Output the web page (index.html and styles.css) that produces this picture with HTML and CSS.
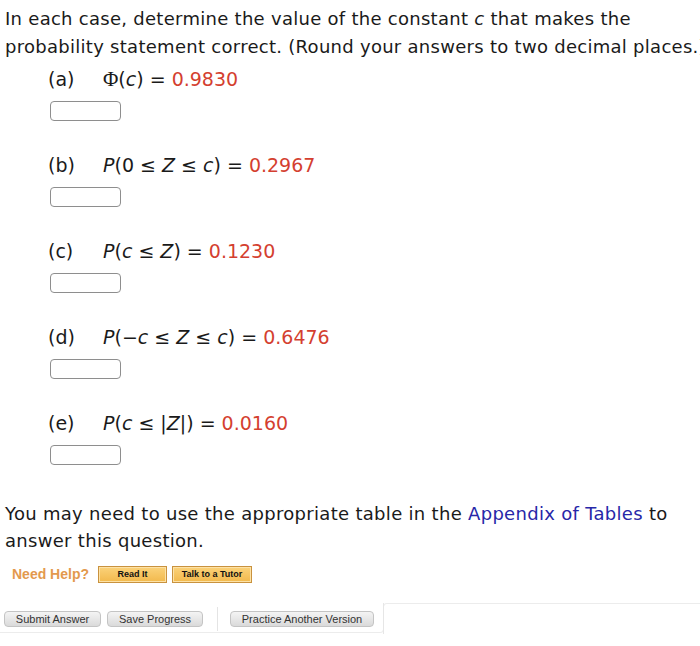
FILE: index.html
```html
<!DOCTYPE html>
<html>
<head>
<meta charset="utf-8">
<link rel="stylesheet" href="styles.css">
</head>
<body>
<div class="page">
  <p class="intro">In each case, determine the value of the constant <i>c</i> that makes the<br>probability statement correct. (Round your answers to two decimal places.)</p>

  <div class="part">
    <div class="stmt"><span class="lbl">(a)</span><span class="phi">Φ</span>(<i>c</i>) = <span class="num">0.9830</span></div>
    <div class="answer"></div>
  </div>
  <div class="part">
    <div class="stmt"><span class="lbl">(b)</span><i>P</i>(0 ≤ <i>Z</i> ≤ <i>c</i>) = <span class="num">0.2967</span></div>
    <div class="answer"></div>
  </div>
  <div class="part">
    <div class="stmt"><span class="lbl">(c)</span><i>P</i>(<i>c</i> ≤ <i>Z</i>) = <span class="num">0.1230</span></div>
    <div class="answer"></div>
  </div>
  <div class="part">
    <div class="stmt"><span class="lbl">(d)</span><i>P</i>(−<i>c</i> ≤ <i>Z</i> ≤ <i>c</i>) = <span class="num">0.6476</span></div>
    <div class="answer"></div>
  </div>
  <div class="part">
    <div class="stmt"><span class="lbl">(e)</span><i>P</i>(<i>c</i> ≤ |<i>Z</i>|) = <span class="num">0.0160</span></div>
    <div class="answer"></div>
  </div>

  <p class="note">You may need to use the appropriate table in the <span class="link">Appendix of Tables</span> to<br>answer this question.</p>

  <div class="help">
    <span class="help-label">Need Help?</span>
    <span class="gold-btn read">Read It</span>
    <span class="gold-btn tutor">Talk to a Tutor</span>
  </div>

  <div class="actions">
    <div class="actions-left">
      <span class="gray-btn submit">Submit Answer</span>
      <span class="gray-btn save">Save Progress</span>
      <span class="divider"></span>
      <span class="gray-btn practice">Practice Another Version</span>
    </div>
    <div class="actions-right"></div>
  </div>
</div>
</body>
</html>
```

FILE: styles.css
```css
html, body {
  margin: 0;
  padding: 0;
  background: #fff;
}
.page {
  width: 700px;
  height: 646px;
  overflow: hidden;
  padding: 5px 0 0 5px;
  box-sizing: border-box;
  font-family: "DejaVu Sans", Verdana, sans-serif;
  font-size: 18px;
  line-height: 28px;
  color: #1a1a1a;
}
.intro {
  margin: 0 0 4px;
  white-space: nowrap;
  letter-spacing: 0.28px;
}
i {
  font-style: oblique;
}
.part {
  margin-left: 43px;
}
.stmt {
  height: 28px;
  white-space: nowrap;
  font-size: 19px;
}
.lbl {
  display: inline-block;
  width: 55px;
}
.phi {
  font-family: "Liberation Serif", "Times New Roman", serif;
  font-size: 21px;
}
.num {
  color: #d43f30;
}
.answer {
  margin: 8px 0 30px 2px;
  width: 71px;
  height: 20px;
  box-sizing: border-box;
  border: 1px solid #8e8e8e;
  border-radius: 4px;
  background: #fff;
}
.note {
  margin: 35px 0 0;
  line-height: 27px;
  white-space: nowrap;
  letter-spacing: 0.3px;
}
.link {
  color: #2727a8;
}
.help {
  display: flex;
  align-items: center;
  margin: 11px 0 0 7px;
  height: 18px;
  font-family: "Liberation Sans", Arial, sans-serif;
}
.help-label {
  color: #e3994d;
  font-weight: bold;
  font-size: 14px;
  margin-right: 9px;
}
.gold-btn {
  display: inline-flex;
  align-items: center;
  justify-content: center;
  box-sizing: border-box;
  height: 17px;
  font-size: 9px;
  font-weight: bold;
  color: #111;
  background: linear-gradient(#fbd27a, #f2b94c);
  border: 1px solid #c9923e;
  box-shadow: inset 0 0 0 1px #fde2a6;
}
.read {
  width: 69px;
}
.tutor {
  width: 80px;
  margin-left: 5px;
}
.actions {
  display: flex;
  margin: 20px 0 0 -5px;
  font-family: "Liberation Sans", Arial, sans-serif;
}
.actions-left {
  display: flex;
  align-items: center;
  width: 384px;
  height: 30px;
  box-sizing: border-box;
  padding: 2px 0 0 4px;
  border-bottom: 1px solid #ececec;
  border-right: 1px solid #e6e6e6;
  border-bottom-right-radius: 4px;
}
.actions-right {
  flex: 1;
  border-top: 1px solid #ececec;
  border-top-left-radius: 4px;
  margin-left: -1px;
  border-left: 1px solid #e6e6e6;
  height: 30px;
}
.gray-btn {
  display: inline-flex;
  align-items: center;
  justify-content: center;
  box-sizing: border-box;
  height: 16px;
  font-size: 11px;
  color: #333;
  background: linear-gradient(#f4f4f4, #dadada);
  border: 1px solid #c4c4c4;
  border-radius: 4px;
}
.submit {
  width: 97px;
}
.save {
  width: 96px;
  margin-left: 6px;
}
.divider {
  display: inline-block;
  width: 1px;
  height: 24px;
  background: #e4e4e4;
  margin: 0 12px 0 14px;
}
.practice {
  width: 144px;
}
```
